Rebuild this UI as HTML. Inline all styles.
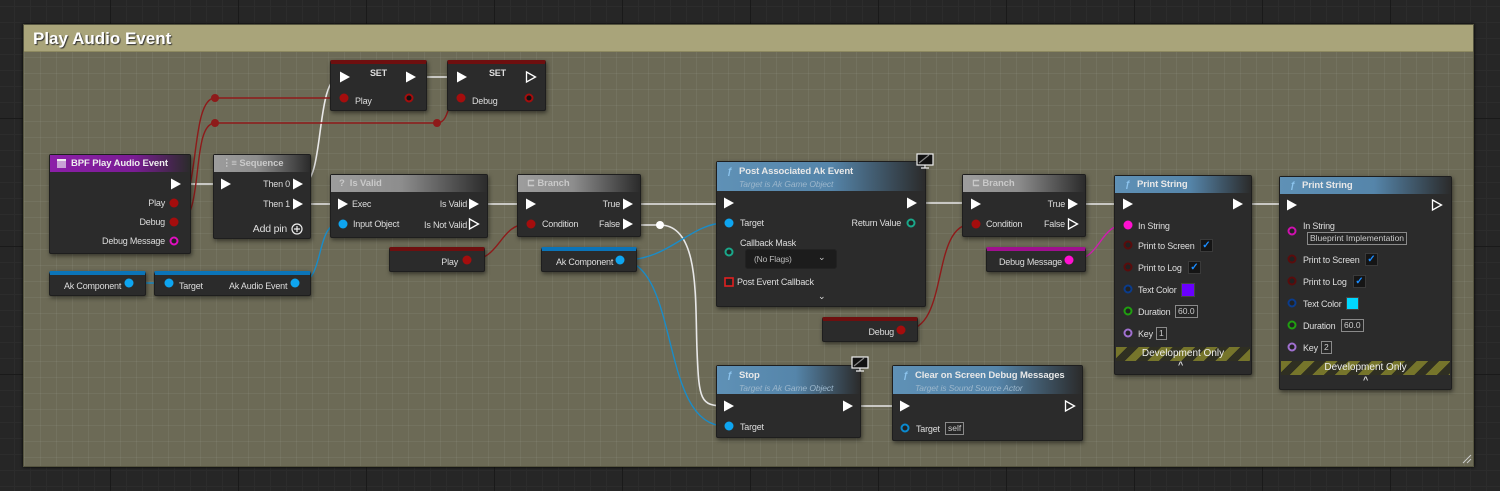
<!DOCTYPE html>
<html><head><meta charset="utf-8"><style>
*{margin:0;padding:0;box-sizing:border-box}
body{width:1500px;height:491px;overflow:hidden;position:relative;font-family:"Liberation Sans",sans-serif;font-size:9px;color:#dcdcdc;
background-color:#262626;
background-image:linear-gradient(#1a1a1a 1px,transparent 1px),linear-gradient(90deg,#1a1a1a 1px,transparent 1px),linear-gradient(#2c2c2c 1px,transparent 1px),linear-gradient(90deg,#2c2c2c 1px,transparent 1px);
background-size:128px 128px,128px 128px,16px 16px,16px 16px;background-position:-18px -10px,-18px -10px,-2px 6px,-2px 6px}
#cm{position:absolute;left:23px;top:24px;width:1451px;height:443px;background-color:#6c6a56;
background-image:linear-gradient(rgba(255,255,255,.05) 1px,transparent 1px),linear-gradient(90deg,rgba(255,255,255,.05) 1px,transparent 1px);background-size:16px 16px;border:1px solid #55543f;box-shadow:0 0 3px #000}
#ct{position:absolute;left:0;top:0;width:100%;height:27px;background:#a9a47a;border-bottom:1px solid #8d8960}
#ct span{position:absolute;left:9px;top:4px;font-size:17px;font-weight:bold;color:#fff;text-shadow:1px 1px 1px #333}
.n{position:absolute;background:#2b2b2b;border:1px solid #1e1e1e;box-shadow:1px 2px 4px rgba(0,0,0,.5);border-radius:2px}
.h{position:absolute;left:0;top:0;right:0;font-weight:bold;font-size:9.5px;white-space:nowrap;letter-spacing:-.1px}
.hg{background:linear-gradient(90deg,#9d9d9d,#8d8d8d 45%,#2b2b2b);color:#c9c9c9;height:17px}
.hb{background:linear-gradient(90deg,#5f91b6,#5585aa 55%,#2b2b2b);color:#e8e8e8;height:29px}
.sr{border-top:4px solid #6e0f0f}.sb{border-top:4px solid #0b74b8}.sm{border-top:4px solid #a0108f}
.t{position:absolute;white-space:nowrap;color:#dedede;font-size:9px;letter-spacing:-.2px}
.sub{font-style:italic;font-weight:normal;color:#9cb7cc;font-size:8.5px}
.box{position:absolute;border:1px solid #8a8a8a;color:#ccc;font-size:8.5px;line-height:11px;padding:0 2px;background:#262626}
.cb{position:absolute;width:13px;height:13px;background:#151515;border:1px solid #3a3a3a;color:#1a8cff;font-size:10px;line-height:11px;text-align:center;font-weight:bold}
.st{position:absolute;height:14px;background:repeating-linear-gradient(135deg,#76752b 0 8px,#2f2f22 8px 16px);color:#eee;text-align:center;font-size:10px;line-height:14px}
svg{position:absolute;left:0;top:0}
</style></head><body>
<div id="cm"><div id="ct"><span>Play Audio Event</span></div></div>

<svg width="1500" height="491" fill="none">
<g stroke="#e8e8e8" stroke-width="1.6">
<path d="M180 184H222"/><path d="M302 184C325 184 315 77 340 77"/><path d="M415 77H457"/>
<path d="M302 204H339"/><path d="M478 204H527"/><path d="M632 204H725"/><path d="M916 203H972"/>
<path d="M1077 204H1124"/><path d="M1242 204H1288"/><path d="M632 225H660C700 225 695 300 697 350C699 400 700 406 725 406"/><path d="M852 406H901"/>
</g>
<g stroke="#8e1a1a" stroke-width="1.4">
<path d="M178 203C200 203 190 98 215 98H340"/><path d="M178 222C205 222 190 123 215 123H437C450 123 447 98 457 98"/>
<path d="M471 260C500 260 500 224 527 224"/><path d="M905 330C950 330 930 224 972 224"/>
</g>
<g stroke="#1a8cc8" stroke-width="1.4">
<path d="M133 283H165"/><path d="M299 283C325 283 315 224 339 224"/>
<path d="M624 260C670 260 690 223 725 223"/><path d="M624 260C680 270 660 426 725 426"/>
</g>
<path d="M1073 260C1100 260 1100 225 1124 225" stroke="#d01bb0" stroke-width="1.4"/>
<circle cx="215" cy="98" r="4" fill="#8e1a1a"/><circle cx="215" cy="123" r="4" fill="#8e1a1a"/><circle cx="437" cy="123" r="4" fill="#8e1a1a"/>
<circle cx="660" cy="225" r="4" fill="#fff"/>
</svg>

<!-- BPF -->
<div class="n" style="left:49px;top:154px;width:142px;height:100px"><div class="h" style="height:17px;background:linear-gradient(90deg,#8c1fa8,#7a1c94 60%,#2b2b2b);color:#eee"><span style="position:absolute;left:7px;top:4px;width:9px;height:9px;background:#c9a2d6;border-top:2px solid #eee"></span><span style="position:absolute;left:21px;top:3px">BPF Play Audio Event</span></div>
<span class="t" style="right:25px;top:43px">Play</span><span class="t" style="right:25px;top:62px">Debug</span><span class="t" style="right:25px;top:81px">Debug Message</span></div>
<!-- Sequence -->
<div class="n" style="left:213px;top:154px;width:98px;height:85px"><div class="h hg"><span style="position:absolute;left:8px;top:3px">⋮≡ Sequence</span></div>
<span class="t" style="right:20px;top:24px">Then 0</span><span class="t" style="right:20px;top:44px">Then 1</span><span class="t" style="right:23px;top:68px;font-size:10.5px">Add pin</span></div>
<!-- SETs -->
<div class="n sr" style="left:330px;top:60px;width:97px;height:51px"><span class="t" style="left:39px;top:4px;font-weight:bold">SET</span><span class="t" style="left:24px;top:32px">Play</span></div>
<div class="n sr" style="left:447px;top:60px;width:99px;height:51px"><span class="t" style="left:41px;top:4px;font-weight:bold">SET</span><span class="t" style="left:24px;top:32px">Debug</span></div>
<!-- IsValid -->
<div class="n" style="left:330px;top:174px;width:158px;height:64px"><div class="h hg"><span style="position:absolute;left:8px;top:3px">?&nbsp; Is Valid</span></div>
<span class="t" style="left:21px;top:24px">Exec</span><span class="t" style="left:22px;top:44px">Input Object</span><span class="t" style="right:20px;top:24px">Is Valid</span><span class="t" style="right:20px;top:45px">Is Not Valid</span></div>
<!-- Branch1 -->
<div class="n" style="left:517px;top:174px;width:124px;height:63px"><div class="h hg"><span style="position:absolute;left:9px;top:3px">⊏ Branch</span></div>
<span class="t" style="left:24px;top:44px">Condition</span><span class="t" style="right:20px;top:24px">True</span><span class="t" style="right:20px;top:44px">False</span></div>
<!-- getters -->
<div class="n sr" style="left:389px;top:247px;width:96px;height:25px"><span class="t" style="right:26px;top:6px">Play</span></div>
<div class="n sb" style="left:49px;top:271px;width:97px;height:25px"><span class="t" style="left:14px;top:6px">Ak Component</span></div>
<div class="n sb" style="left:154px;top:271px;width:157px;height:25px"><span class="t" style="left:24px;top:6px">Target</span><span class="t" style="left:74px;top:6px">Ak Audio Event</span></div>
<div class="n sb" style="left:541px;top:247px;width:96px;height:25px"><span class="t" style="left:14px;top:6px">Ak Component</span></div>
<div class="n sr" style="left:822px;top:317px;width:96px;height:25px"><span class="t" style="right:23px;top:6px">Debug</span></div>
<div class="n sm" style="left:986px;top:247px;width:100px;height:25px"><span class="t" style="left:12px;top:6px">Debug Message</span></div>
<!-- Post -->
<div class="n" style="left:716px;top:161px;width:210px;height:146px"><div class="h hb"><span style="position:absolute;left:10px;top:4px;font-style:italic;color:#8cc4ee">ƒ</span><span style="position:absolute;left:22px;top:4px">Post Associated Ak Event</span><span class="sub" style="position:absolute;left:22px;top:17px">Target is Ak Game Object</span></div>
<span class="t" style="left:23px;top:56px">Target</span><span class="t" style="right:24px;top:56px">Return Value</span><span class="t" style="left:23px;top:76px">Callback Mask</span>
<div style="position:absolute;left:28px;top:87px;width:92px;height:20px;background:#1c1c1c;border-radius:3px;border:1px solid #222"><span class="t" style="left:8px;top:4px;font-size:8.5px;color:#bbb">(No Flags)</span><span class="t" style="left:72px;top:2px;color:#ccc">⌄</span></div>
<span class="t" style="left:20px;top:115px">Post Event Callback</span><span class="t" style="left:101px;top:129px">⌄</span></div>
<!-- Branch2 -->
<div class="n" style="left:962px;top:174px;width:124px;height:63px"><div class="h hg"><span style="position:absolute;left:9px;top:3px">⊏ Branch</span></div>
<span class="t" style="left:23px;top:44px">Condition</span><span class="t" style="right:20px;top:24px">True</span><span class="t" style="right:20px;top:44px">False</span></div>
<!-- PS1 -->
<div class="n" style="left:1114px;top:175px;width:138px;height:200px"><div class="h hb" style="height:17px"><span style="position:absolute;left:10px;top:3px;font-style:italic;color:#8cc4ee">ƒ</span><span style="position:absolute;left:22px;top:3px">Print String</span></div>
<span class="t" style="left:23px;top:45px">In String</span>
<span class="t" style="left:23px;top:65px">Print to Screen</span><div class="cb" style="left:85px;top:63px">✓</div>
<span class="t" style="left:23px;top:87px">Print to Log</span><div class="cb" style="left:73px;top:85px">✓</div>
<span class="t" style="left:23px;top:109px">Text Color</span><div style="position:absolute;left:66px;top:107px;width:14px;height:14px;background:#6a00ff;border:1px solid #444"></div>
<span class="t" style="left:23px;top:131px">Duration</span><div class="box" style="left:60px;top:129px">60.0</div>
<span class="t" style="left:23px;top:153px">Key</span><div class="box" style="left:41px;top:151px">1</div>
<div class="st" style="left:1px;right:1px;top:171px">Development Only</div><span class="t" style="left:63px;top:184px;font-weight:bold">^</span></div>
<!-- PS2 -->
<div class="n" style="left:1279px;top:176px;width:173px;height:214px"><div class="h hb" style="height:17px"><span style="position:absolute;left:10px;top:3px;font-style:italic;color:#8cc4ee">ƒ</span><span style="position:absolute;left:22px;top:3px">Print String</span></div>
<span class="t" style="left:23px;top:44px">In String</span><div class="box" style="left:27px;top:55px">Blueprint Implementation</div>
<span class="t" style="left:23px;top:78px">Print to Screen</span><div class="cb" style="left:85px;top:76px">✓</div>
<span class="t" style="left:23px;top:100px">Print to Log</span><div class="cb" style="left:73px;top:98px">✓</div>
<span class="t" style="left:23px;top:122px">Text Color</span><div style="position:absolute;left:66px;top:120px;width:13px;height:13px;background:#00d8ff;border:1px solid #444"></div>
<span class="t" style="left:23px;top:144px">Duration</span><div class="box" style="left:61px;top:142px">60.0</div>
<span class="t" style="left:23px;top:166px">Key</span><div class="box" style="left:41px;top:164px">2</div>
<div class="st" style="left:1px;right:1px;top:184px">Development Only</div><span class="t" style="left:83px;top:198px;font-weight:bold">^</span></div>
<!-- Stop -->
<div class="n" style="left:716px;top:365px;width:145px;height:73px"><div class="h hb" style="height:28px"><span style="position:absolute;left:10px;top:4px;font-style:italic;color:#8cc4ee">ƒ</span><span style="position:absolute;left:22px;top:4px">Stop</span><span class="sub" style="position:absolute;left:22px;top:17px">Target is Ak Game Object</span></div>
<span class="t" style="left:23px;top:56px">Target</span></div>
<!-- Clear -->
<div class="n" style="left:892px;top:365px;width:191px;height:76px"><div class="h hb" style="height:28px"><span style="position:absolute;left:10px;top:4px;font-style:italic;color:#8cc4ee">ƒ</span><span style="position:absolute;left:22px;top:4px">Clear on Screen Debug Messages</span><span class="sub" style="position:absolute;left:22px;top:17px">Target is Sound Source Actor</span></div>
<span class="t" style="left:23px;top:58px">Target</span><div class="box" style="left:52px;top:56px">self</div></div>

<!-- pins layer -->
<svg width="1500" height="491">
<defs>
<path id="ex" d="M-5 -5.5L5 0L-5 5.5Z" fill="#fff"/>
<path id="eh" d="M-4.5 -5L4.5 0L-4.5 5Z" fill="none" stroke="#fff" stroke-width="1.3"/>
</defs>
<g>
<use href="#ex" x="176" y="184"/><use href="#ex" x="226" y="184"/><use href="#ex" x="298" y="184"/><use href="#ex" x="298" y="204"/>
<use href="#ex" x="345" y="77"/><use href="#ex" x="411" y="77"/><use href="#ex" x="462" y="77"/><use href="#eh" x="531" y="77"/>
<use href="#ex" x="343" y="204"/><use href="#ex" x="474" y="204"/><use href="#eh" x="474" y="224"/>
<use href="#ex" x="531" y="204"/><use href="#ex" x="628" y="204"/><use href="#ex" x="628" y="224"/>
<use href="#ex" x="729" y="203"/><use href="#ex" x="912" y="203"/>
<use href="#ex" x="976" y="204"/><use href="#ex" x="1073" y="204"/><use href="#eh" x="1073" y="224"/>
<use href="#ex" x="1128" y="204"/><use href="#ex" x="1238" y="204"/><use href="#ex" x="1292" y="205"/><use href="#eh" x="1437" y="205"/>
<use href="#ex" x="729" y="406"/><use href="#ex" x="848" y="406"/><use href="#ex" x="905" y="406"/><use href="#eh" x="1070" y="406"/>
</g>
<g fill="#a50d0d">
<circle cx="174" cy="203" r="4.5"/><circle cx="174" cy="222" r="4.5"/><circle cx="344" cy="98" r="4.5"/><circle cx="461" cy="98" r="4.5"/>
<circle cx="467" cy="260" r="4.5"/><circle cx="531" cy="224" r="4.5"/><circle cx="901" cy="330" r="4.5"/><circle cx="976" cy="224" r="4.5"/>
</g>
<circle cx="409" cy="98" r="3.5" fill="#111" stroke="#a50d0d" stroke-width="2"/><circle cx="529" cy="98" r="3.5" fill="#111" stroke="#a50d0d" stroke-width="2"/>
<g fill="#0ea5f0">
<circle cx="129" cy="283" r="4.5"/><circle cx="169" cy="283" r="4.5"/><circle cx="295" cy="283" r="4.5"/><circle cx="343" cy="224" r="4.5"/>
<circle cx="620" cy="260" r="4.5"/><circle cx="729" cy="223" r="4.5"/><circle cx="729" cy="426" r="4.5"/>
</g>
<circle cx="905" cy="428" r="3.5" fill="#222" stroke="#0a8ad0" stroke-width="2"/>
<circle cx="174" cy="241" r="3.5" fill="#222" stroke="#e010c0" stroke-width="2"/>
<circle cx="1069" cy="260" r="4.5" fill="#ff10d0"/><circle cx="1128" cy="225" r="4.5" fill="#ff10d0"/>
<circle cx="1292" cy="231" r="3.5" fill="#222" stroke="#d010b0" stroke-width="2"/>
<g fill="#222" stroke-width="2">
<circle cx="911" cy="223" r="3.5" stroke="#1aa88a"/><circle cx="729" cy="252" r="3.5" stroke="#1aa88a"/>
<circle cx="1128" cy="245" r="3.5" stroke="#5a0c0c"/><circle cx="1128" cy="267" r="3.5" stroke="#5a0c0c"/><circle cx="1128" cy="289" r="3.5" stroke="#0a3c8c"/><circle cx="1128" cy="311" r="3.5" stroke="#20a010"/><circle cx="1128" cy="333" r="3.5" stroke="#a070d0"/>
<circle cx="1292" cy="259" r="3.5" stroke="#5a0c0c"/><circle cx="1292" cy="281" r="3.5" stroke="#5a0c0c"/><circle cx="1292" cy="303" r="3.5" stroke="#0a3c8c"/><circle cx="1292" cy="325" r="3.5" stroke="#20a010"/><circle cx="1292" cy="347" r="3.5" stroke="#a070d0"/>
</g>
<rect x="725" y="278" width="8" height="8" fill="#222" stroke="#e02020" stroke-width="1.6"/>
<circle cx="297" cy="229" r="5" fill="none" stroke="#eee" stroke-width="1.2"/><path d="M294 229h6M297 226v6" stroke="#eee" stroke-width="1.2"/>
<g stroke="#eee" stroke-width="1.2"><rect x="917" y="154" width="16" height="11" fill="#111"/><path d="M925 165v3M921 168h8"/><path d="M919 163l10 -8" stroke="#888"/></g>
<g stroke="#eee" stroke-width="1.2"><rect x="852" y="357" width="16" height="11" fill="#111"/><path d="M860 368v3M856 371h8"/><path d="M854 366l10 -8" stroke="#888"/></g>
<path d="M1463 463l8 -8M1467 463l4 -4" stroke="#ccc" stroke-width="1"/>
</svg>
</body></html>
